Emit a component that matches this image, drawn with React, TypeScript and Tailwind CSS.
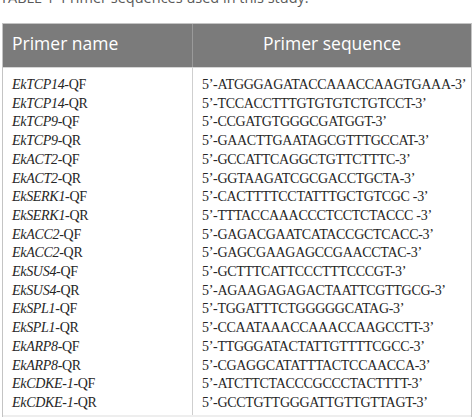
const primers: [string, string, string][] = [
  ["EkTCP14", "-QF", "5’-ATGGGAGATACCAAACCAAGTGAAA-3’"],
  ["EkTCP14", "-QR", "5’-TCCACCTTTGTGTGTCTGTCCT-3’"],
  ["EkTCP9", "-QF", "5’-CCGATGTGGGCGATGGT-3’"],
  ["EkTCP9", "-QR", "5’-GAACTTGAATAGCGTTTGCCAT-3’"],
  ["EkACT2", "-QF", "5’-GCCATTCAGGCTGTTCTTTC-3’"],
  ["EkACT2", "-QR", "5’-GGTAAGATCGCGACCTGCTA-3’"],
  ["EkSERK1", "-QF", "5’-CACTTTTCCTATTTGCTGTCGC -3’"],
  ["EkSERK1", "-QR", "5’-TTTACCAAACCCTCCTCTACCC -3’"],
  ["EkACC2", "-QF", "5’-GAGACGAATCATACCGCTCACC-3’"],
  ["EkACC2", "-QR", "5’-GAGCGAAGAGCCGAACCTAC-3’"],
  ["EkSUS4", "-QF", "5’-GCTTTCATTCCCTTTCCCGT-3’"],
  ["EkSUS4", "-QR", "5’-AGAAGAGAGACTAATTCGTTGCG-3’"],
  ["EkSPL1", "-QF", "5’-TGGATTTCTGGGGGCATAG-3’"],
  ["EkSPL1", "-QR", "5’-CCAATAAACCAAACCAAGCCTT-3’"],
  ["EkARP8", "-QF", "5’-TTGGGATACTATTGTTTTCGCC-3’"],
  ["EkARP8", "-QR", "5’-CGAGGCATATTTACTCCAACCA-3’"],
  ["EkCDKE-1", "-QF", "5’-ATCTTCTACCCGCCCTACTTTT-3’"],
  ["EkCDKE-1", "-QR", "5’-GCCTGTTGGGATTGTTGTTAGT-3’"],
];

export default function App() {
  return (
    <div className="w-[474px] h-[417px] overflow-hidden bg-white">
      {/* caption, cut off by the top edge */}
      <div className="-mt-[12px] h-[20px] leading-[20px] text-[14.5px] text-[#5a5a5a] whitespace-nowrap font-['Open_Sans',sans-serif]">
        <span>TABLE 1</span>
        <span className="ml-[7px]">Primer sequences used in this study.</span>
      </div>

      <div className="mt-[15px] mx-[2px] w-[470px] border border-[#c4c4c4]">
        {/* header */}
        <div className="grid grid-cols-[190px_1fr] bg-[#7b7b7b] text-white text-[17.5px] leading-[24px] font-['Open_Sans',sans-serif] border-b border-[#d6d6d6]">
          <div className="pl-[9px] pt-[7px] pb-[12px] border-r border-[#9a9a9a]">Primer name</div>
          <div className="text-center pt-[7px] pb-[12px]">Primer sequence</div>
        </div>

        {/* body */}
        <div className="grid grid-cols-[190px_1fr] text-[14px] tracking-[-0.3px] leading-[18.7px] text-[#262626] font-['Liberation_Serif',serif] border-b-[4px] border-[#eeeeee]">
          <div className="pl-[9px] pt-[8px] pb-[2px] border-r border-[#cfcfcf]">
            {primers.map(([gene, suffix]) => (
              <div key={gene + suffix} className="whitespace-nowrap">
                <i>{gene}</i>
                {suffix}
              </div>
            ))}
          </div>
          <div className="pl-[9px] pt-[8px] pb-[2px]">
            {primers.map(([gene, suffix, seq]) => (
              <div key={gene + suffix} className="whitespace-nowrap">
                {seq}
              </div>
            ))}
          </div>
        </div>
      </div>
    </div>
  );
}
